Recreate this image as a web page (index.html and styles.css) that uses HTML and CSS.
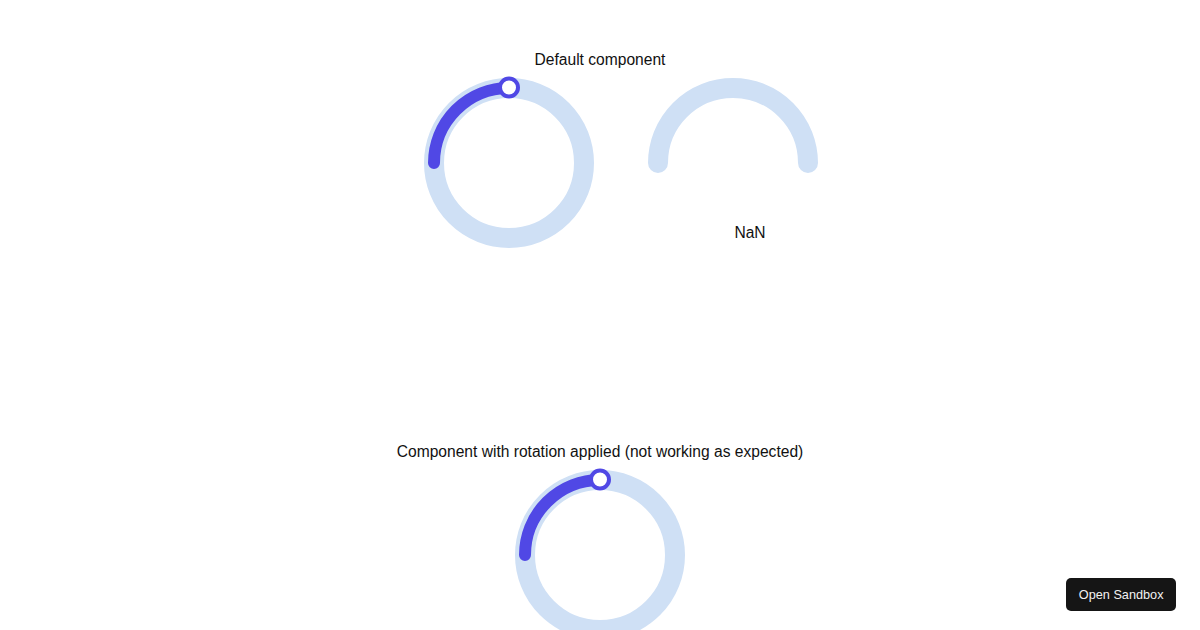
FILE: index.html
```html
<!DOCTYPE html>
<html>
<head>
<meta charset="utf-8">
<link rel="stylesheet" href="styles.css">
</head>
<body>
<main class="page">
  <section class="demo demo-default">
    <h2 class="title">Default component</h2>
    <div class="row">
      <svg class="dial" width="170" height="170" viewBox="0 0 170 170">
        <circle class="track" cx="85" cy="85" r="75"/>
        <path class="progress" d="M10 85 A75 75 0 0 1 85 10"/>
        <circle class="thumb" cx="85" cy="9.5" r="9"/>
      </svg>
      <div class="half">
        <svg class="dial-half" width="170" height="95" viewBox="0 0 170 95">
          <path class="track-half" d="M10 85 A75 75 0 0 1 160 85"/>
        </svg>
        <span class="value">NaN</span>
      </div>
    </div>
  </section>
  <section class="demo demo-rotated">
    <h2 class="title">Component with rotation applied (not working as expected)</h2>
    <svg class="dial" width="170" height="170" viewBox="0 0 170 170">
      <circle class="track" cx="85" cy="85" r="75"/>
      <path class="progress" d="M10 85 A75 75 0 0 1 85 10"/>
      <circle class="thumb" cx="85" cy="9.5" r="9"/>
    </svg>
  </section>
</main>
<button class="sandbox">Open Sandbox</button>
</body>
</html>
```
FILE: styles.css
```css
html, body {
  margin: 0;
  padding: 0;
  height: 100%;
  overflow: hidden;
  background: #ffffff;
}
body {
  font-family: "Liberation Sans", Arial, sans-serif;
  color: #111111;
}
.page {
  display: flex;
  flex-direction: column;
  align-items: center;
  padding-top: 51px;
}
.demo {
  display: flex;
  flex-direction: column;
  align-items: center;
}
.title {
  margin: 0 0 9px;
  font-size: 15.6px;
  line-height: 18px;
  font-weight: 400;
}
.row {
  display: flex;
  gap: 54px;
  padding-left: 42px;
}
.dial, .dial-half {
  display: block;
  overflow: visible;
}
.track {
  fill: none;
  stroke: #cfe0f5;
  stroke-width: 20;
}
.track-half {
  fill: none;
  stroke: #cfe0f5;
  stroke-width: 20;
  stroke-linecap: round;
}
.progress {
  fill: none;
  stroke: #5048e5;
  stroke-width: 12;
  stroke-linecap: round;
}
.thumb {
  fill: #ffffff;
  stroke: #5048e5;
  stroke-width: 4;
}
.half {
  display: flex;
  flex-direction: column;
  align-items: center;
}
.value {
  margin-top: 51px;
  padding-left: 34px;
  font-size: 15.6px;
  line-height: 18px;
}
.demo-rotated {
  margin-top: 195px;
}
.sandbox {
  position: fixed;
  right: 24px;
  bottom: 19px;
  height: 33px;
  padding: 0 12.5px;
  border: none;
  border-radius: 5px;
  background: #151515;
  color: #f2f2f2;
  font-family: "Liberation Sans", Arial, sans-serif;
  font-size: 12.7px;
  cursor: pointer;
}
```
